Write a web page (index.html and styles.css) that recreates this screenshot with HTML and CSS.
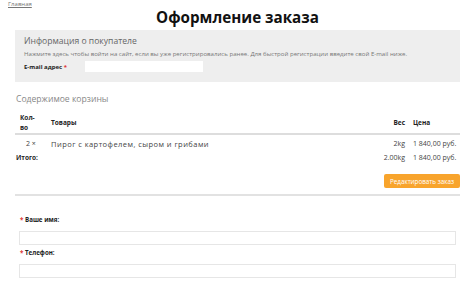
FILE: index.html
```html
<!DOCTYPE html>
<html lang="ru">
<head>
    <meta charset="UTF-8">
    <title>Оформление заказа</title>
    <link rel="stylesheet" href="styles.css">
</head>
<body>
    <div class="page">
        <a class="crumb" href="#">Главная</a>
        <h1 class="title">Оформление заказа</h1>

        <div class="buyer-box">
            <h2>Информация о покупателе</h2>
            <p class="hint">Нажмите здесь чтобы войти на сайт, если вы уже регистрировались ранее. Для быстрой регистрации введите свой E-mail ниже.</p>
            <div class="email-row">
                <label>E-mail адрес <span class="req">*</span></label>
                <input type="text" class="email-input">
            </div>
        </div>

        <h3 class="cart-title">Содержимое корзины</h3>

        <table class="cart">
            <thead>
                <tr>
                    <th class="c-qty">Кол-<br>во</th>
                    <th class="c-name">Товары</th>
                    <th class="c-weight">Вес</th>
                    <th class="c-price">Цена</th>
                </tr>
            </thead>
            <tbody>
                <tr>
                    <td class="c-qty num">2 ×</td>
                    <td class="c-name">Пирог с картофелем, сыром и грибами</td>
                    <td class="c-weight">2kg</td>
                    <td class="c-price">1 840,00 руб.</td>
                </tr>
                <tr class="total">
                    <td class="c-qty"><strong>Итого:</strong></td>
                    <td></td>
                    <td class="c-weight">2.00kg</td>
                    <td class="c-price">1 840,00 руб.</td>
                </tr>
            </tbody>
        </table>

        <div class="actions">
            <button class="edit-btn">Редактировать заказ</button>
        </div>

        <div class="fields">
            <label><span class="req">*</span> Ваше имя:</label>
            <input type="text">
            <label><span class="req">*</span> Телефон:</label>
            <input type="text">
        </div>
    </div>
</body>
</html>
```

FILE: styles.css
```css
* {
    margin: 0;
    padding: 0;
    box-sizing: border-box;
}

body {
    font-family: 'Open Sans', 'Liberation Sans', sans-serif;
    background: #fff;
    color: #333;
}

.page {
    padding: 0 14px 0 15px;
}

.crumb {
    display: block;
    margin-left: -7px;
    padding-top: 1px;
    font-size: 6px;
    line-height: 7px;
    height: 8px;
    color: #777;
}

.title {
    text-align: center;
    font-size: 15.2px;
    font-weight: 700;
    color: #111;
    line-height: 18px;
}

.buyer-box {
    background: #eeeeee;
    margin-top: 4px;
    padding: 4px 9px 10px;
}

.buyer-box h2 {
    font-size: 8.6px;
    font-weight: 400;
    color: #666;
    line-height: 14px;
}

.hint {
    font-size: 6.1px;
    color: #777;
    line-height: 8px;
    margin-top: 2px;
    white-space: nowrap;
}

.email-row {
    display: flex;
    align-items: center;
    margin-top: 3px;
}

.email-row label {
    width: 61px;
    font-size: 6px;
    font-weight: 700;
    color: #222;
}

.req {
    color: #d33;
}

.email-input {
    width: 118px;
    height: 11px;
    border: none;
    background: #fff;
}

.cart-title {
    font-size: 8.6px;
    font-weight: 400;
    color: #888;
    margin: 11px 0 0 1px;
    line-height: 12px;
}

.cart {
    width: 100%;
    border-collapse: collapse;
    margin-top: 8px;
    font-size: 7px;
}

.cart th {
    font-size: 6.5px;
    font-weight: 700;
    text-align: left;
    line-height: 10px;
    padding: 0;
    border-bottom: 2px solid #ddd;
    color: #222;
}

.cart td {
    line-height: 14px;
    color: #444;
    padding: 0;
}

.cart tbody tr:first-child td {
    padding-top: 2px;
}

.cart .c-qty {
    width: 36px;
    padding-left: 5px;
}

.cart td.c-qty {
    padding-left: 1px;
}

.cart td.num {
    padding-left: 11px;
}

.cart td.c-name {
    font-size: 7.5px;
    letter-spacing: 0.45px;
}

.cart .c-weight,
.cart th.c-weight {
    text-align: right;
    padding-right: 8px;
}

.cart .c-price {
    width: 47px;
    white-space: nowrap;
}

.total strong {
    font-size: 6.5px;
    color: #222;
}

.actions {
    display: flex;
    justify-content: flex-end;
    padding: 9px 0 6px;
    border-bottom: 2px solid #e2e2e2;
}

.edit-btn {
    background: #f8a42c;
    color: #fff;
    border: none;
    border-radius: 2px;
    font-family: inherit;
    font-size: 6.3px;
    width: 76px;
    height: 14px;
}

.fields {
    padding: 19px 4px 0 4px;
}

.fields label {
    display: block;
    padding-left: 1px;
    font-size: 6.2px;
    font-weight: 700;
    color: #222;
    line-height: 10px;
}

.fields input {
    display: block;
    width: 100%;
    height: 14px;
    border: 1px solid #e6e6e6;
    margin: 6px 0 3px;
}
```
